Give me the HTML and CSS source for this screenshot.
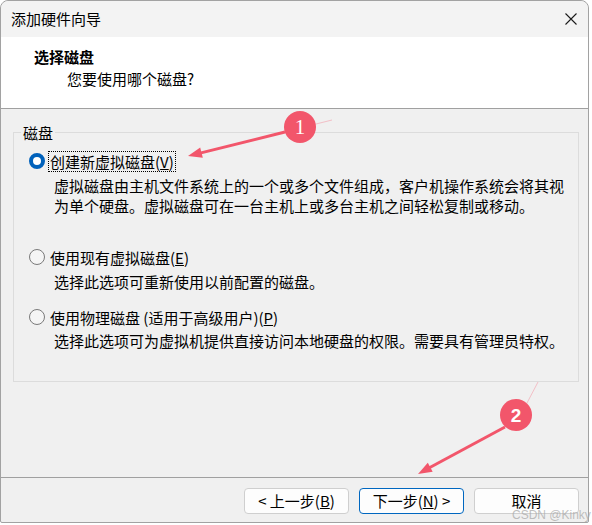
FILE: index.html
```html
<!DOCTYPE html>
<html lang="zh-CN">
<head>
<meta charset="utf-8">
<title>添加硬件向导</title>
<link rel="stylesheet" href="styles.css">
</head>
<body>
<div class="window">
  <div class="titlebar">
    <span class="title">添加硬件向导</span>
    <span class="close">
      <svg width="12" height="12" viewBox="0 0 12 12"><path d="M0.5 0.5 L11.5 11.5 M11.5 0.5 L0.5 11.5" stroke="#1b1b1b" stroke-width="1.1" fill="none"/></svg>
    </span>
  </div>
  <div class="header">
    <div class="h-title">选择磁盘</div>
    <div class="h-sub">您要使用哪个磁盘?</div>
  </div>
  <div class="content">
    <fieldset class="group">
      <legend class="legend">磁盘</legend>
      <div class="option first">
        <span class="radio checked"></span><span class="label focus">创建新虚拟磁盘(<u>V</u>)</span>
      </div>
      <div class="desc d1">虚拟磁盘由主机文件系统上的一个或多个文件组成，客户机操作系统会将其视<br>为单个硬盘。虚拟磁盘可在一台主机上或多台主机之间轻松复制或移动。</div>
      <div class="option second">
        <span class="radio"></span><span class="label">使用现有虚拟磁盘(<u>E</u>)</span>
      </div>
      <div class="desc d2">选择此选项可重新使用以前配置的磁盘。</div>
      <div class="option third">
        <span class="radio"></span><span class="label">使用物理磁盘 (适用于高级用户)(<u>P</u>)</span>
      </div>
      <div class="desc d3">选择此选项可为虚拟机提供直接访问本地硬盘的权限。需要具有管理员特权。</div>
    </fieldset>
  </div>
  <div class="footer">
    <button class="btn">&lt; 上一步(<u>B</u>)</button>
    <button class="btn default">下一步(<u>N</u>) &gt;</button>
    <button class="btn">取消</button>
  </div>
  <svg class="annot" width="592" height="525" viewBox="0 0 592 525">
    <line x1="316" y1="124" x2="332" y2="120" stroke="#f5a0ac" stroke-width="1" opacity="0.6"/>
    <line x1="285" y1="132" x2="198" y2="153.6" stroke="#f2566b" stroke-width="3"/>
    <polygon points="188,156 202.8,157.8 200.2,147.6" fill="#f2566b"/>
    <circle cx="300" cy="127" r="16" fill="#f2566b"/>
    <text x="300" y="134" class="num1">1</text>
    <line x1="527" y1="403" x2="538" y2="382" stroke="#f5a0ac" stroke-width="1" opacity="0.6"/>
    <line x1="505" y1="427" x2="428" y2="468.5" stroke="#f2566b" stroke-width="3"/>
    <polygon points="418,474 432.7,471.8 427.8,462.8" fill="#f2566b"/>
    <circle cx="516" cy="415" r="16" fill="#f2566b"/>
    <text x="516" y="422" class="num2">2</text>
  </svg>
  <div class="watermark">CSDN @Kinky</div>
</div>
</body>
</html>
```

FILE: styles.css
```css
html, body {
  margin: 0;
  padding: 0;
  background: #ffffff;
}

body {
  font-family: "Noto Sans CJK SC", "Noto Sans", sans-serif;
  font-size: 15px;
  color: #000;
}

.window {
  position: relative;
  box-sizing: border-box;
  width: 589px;
  height: 523px;
  border: 1px solid #a2a2a2;
  border-radius: 8px 8px 2px 2px;
  background: #f0f0f0;
  display: flex;
  flex-direction: column;
}

.titlebar {
  height: 36px;
  flex: 0 0 36px;
  background: #f3f3f3;
  border-radius: 8px 8px 0 0;
  display: flex;
  align-items: center;
  justify-content: space-between;
  padding: 0 11px 0 10px;
}

.title {
  line-height: 20px;
  font-size: 15px;
}

.close {
  width: 12px;
  height: 12px;
  display: flex;
}

.header {
  box-sizing: border-box;
  height: 72px;
  flex: 0 0 72px;
  background: #ffffff;
  border-bottom: 1px solid #a0a0a0;
  padding: 10px 0 0 33px;
}

.h-title {
  font-weight: bold;
  line-height: 20px;
}

.h-sub {
  line-height: 20px;
  margin-top: 2px;
  padding-left: 33px;
}

.content {
  flex: 1 1 auto;
  padding: 13px 9px 0 12px;
}

.group {
  margin: 0;
  padding: 0 0 30px 0;
  border: 1px solid #dcdcdc;
  min-width: 0;
}

.legend {
  margin-left: 7px;
  padding: 0 2px;
  line-height: 21px;
}

.option {
  display: flex;
  align-items: center;
  height: 20px;
  padding-left: 15px;
}

.option.first { margin-top: 8px; }
.option.second { margin-top: 31px; }
.option.third { margin-top: 15px; }

.radio {
  box-sizing: border-box;
  width: 16px;
  height: 16px;
  border-radius: 50%;
  border: 1px solid #7a7a7a;
  background: #f5f5f5;
  margin-right: 3px;
  flex: 0 0 auto;
}

.radio.checked {
  border: 4.5px solid #0061bb;
  background: #ffffff;
}

.label {
  line-height: 19px;
  padding: 0 1px;
  border: 1px solid transparent;
}

.label.focus {
  border: 1px dotted #000;
}

.desc {
  padding-left: 40px;
  line-height: 20px;
}

.desc.d1 { margin-top: 5px; }
.desc.d2 { margin-top: 5px; }
.desc.d3 { margin-top: 4px; }

.footer {
  box-sizing: border-box;
  height: 45px;
  flex: 0 0 45px;
  border-top: 1px solid #a0a0a0;
  display: flex;
  justify-content: flex-end;
  align-items: flex-start;
  gap: 10px;
  padding: 10px 9px 0 0;
}

.btn {
  box-sizing: border-box;
  width: 105px;
  height: 26px;
  background: #fdfdfd;
  border: 1px solid #cfcfcf;
  border-radius: 4px;
  font-family: "Noto Sans CJK SC", "Noto Sans", sans-serif;
  font-size: 15px;
  line-height: 20px;
  color: #000;
  padding: 0;
}

.btn.default {
  border-color: #0067c0;
}

.annot {
  position: absolute;
  left: -1px;
  top: -1px;
  pointer-events: none;
}

.num1 {
  font-family: "Liberation Serif", serif;
  font-size: 21px;
  fill: #ffffff;
  text-anchor: middle;
}

.num2 {
  font-family: "Liberation Sans", sans-serif;
  font-weight: bold;
  font-size: 19px;
  fill: #ffffff;
  text-anchor: middle;
}

.watermark {
  position: absolute;
  left: 511px;
  top: 507px;
  font-family: "Liberation Sans", sans-serif;
  font-size: 12px;
  line-height: 14px;
  color: rgba(170, 170, 170, 0.75);
  white-space: nowrap;
}
```
